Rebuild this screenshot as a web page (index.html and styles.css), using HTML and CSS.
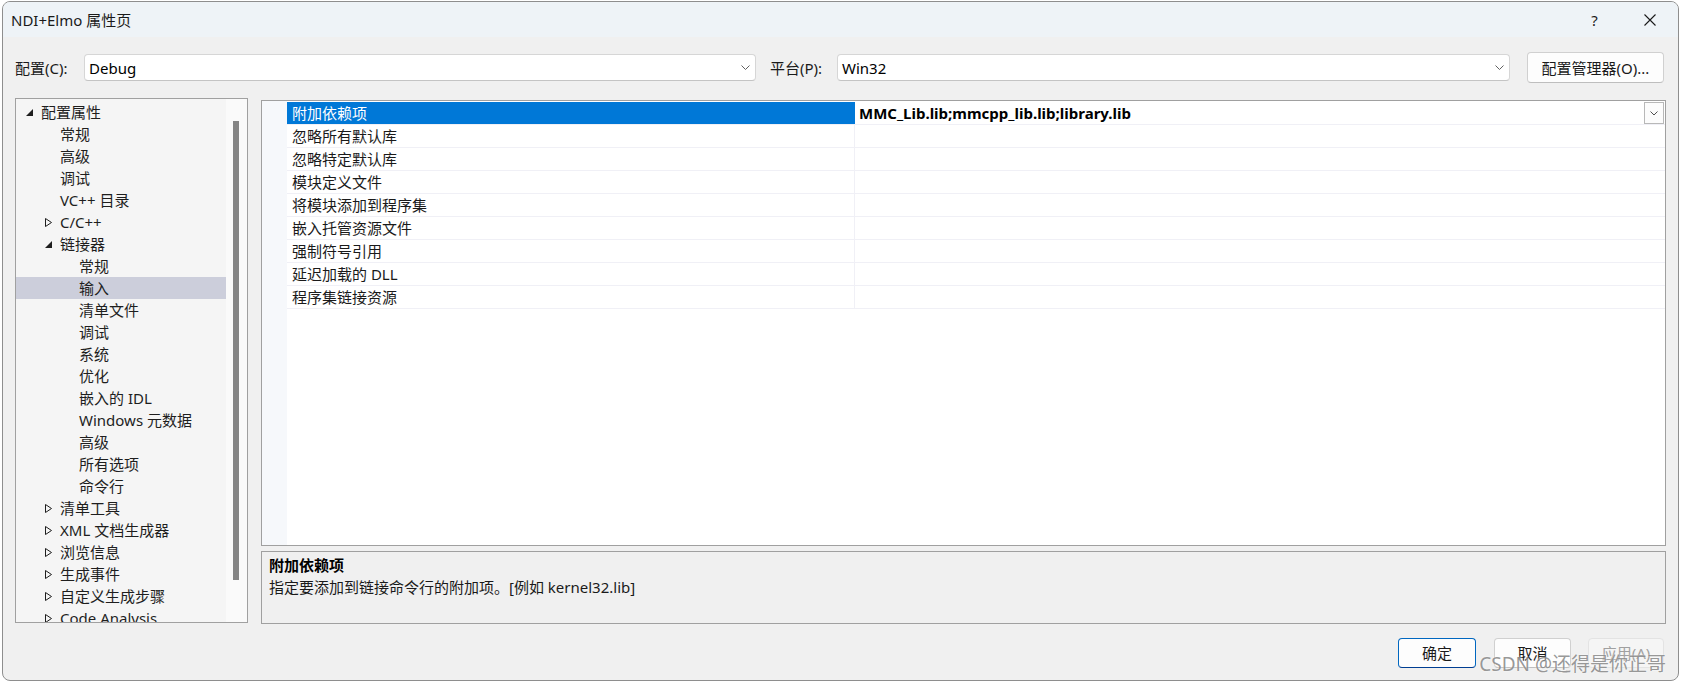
FILE: index.html
```html
<!DOCTYPE html>
<html lang="zh-CN">
<head>
<meta charset="utf-8">
<title>NDI+Elmo 属性页</title>
<link rel="stylesheet" href="styles.css">
</head>
<body>
<div class="window">
  <div class="titlebar">
    <div class="title">NDI+Elmo 属性页</div>
    <div class="tb-btn tb-help">?</div>
    <div class="tb-btn tb-close">
      <svg width="12" height="12" viewBox="0 0 12 12"><path d="M0.5 0.5 L11.5 11.5 M11.5 0.5 L0.5 11.5" stroke="#1a1a1a" stroke-width="1.1" fill="none"/></svg>
    </div>
  </div>
  <div class="content">
    <div class="config-row">
      <div class="lbl lbl-config">配置(C):</div>
      <div class="combo combo-config">
        <span class="combo-text">Debug</span>
        <svg class="chev" width="9" height="5" viewBox="0 0 9 5"><path d="M0.5 0.5 L4.5 4.5 L8.5 0.5" stroke="#606060" stroke-width="1" fill="none"/></svg>
      </div>
      <div class="lbl lbl-platform">平台(P):</div>
      <div class="combo combo-platform">
        <span class="combo-text">Win32</span>
        <svg class="chev" width="9" height="5" viewBox="0 0 9 5"><path d="M0.5 0.5 L4.5 4.5 L8.5 0.5" stroke="#606060" stroke-width="1" fill="none"/></svg>
      </div>
      <button class="btn btn-mgr">配置管理器(O)...</button>
    </div>

    <div class="main-row">
      <div class="tree">
        <div class="tree-list">
          <div class="ti l0"><span class="tw"><svg width="7" height="7" viewBox="0 0 7 7"><polygon points="7,0 7,7 0,7" fill="#1e1e1e"/></svg></span>配置属性</div>
          <div class="ti l1"><span class="tw"></span>常规</div>
          <div class="ti l1"><span class="tw"></span>高级</div>
          <div class="ti l1"><span class="tw"></span>调试</div>
          <div class="ti l1"><span class="tw"></span>VC++ 目录</div>
          <div class="ti l1"><span class="tw"><svg width="7" height="9" viewBox="0 0 7 9"><polygon points="0.5,0.5 6.5,4.5 0.5,8.5" fill="none" stroke="#1e1e1e" stroke-width="1"/></svg></span>C/C++</div>
          <div class="ti l1"><span class="tw"><svg width="7" height="7" viewBox="0 0 7 7"><polygon points="7,0 7,7 0,7" fill="#1e1e1e"/></svg></span>链接器</div>
          <div class="ti l2"><span class="tw"></span>常规</div>
          <div class="ti l2 sel"><span class="tw"></span>输入</div>
          <div class="ti l2"><span class="tw"></span>清单文件</div>
          <div class="ti l2"><span class="tw"></span>调试</div>
          <div class="ti l2"><span class="tw"></span>系统</div>
          <div class="ti l2"><span class="tw"></span>优化</div>
          <div class="ti l2"><span class="tw"></span>嵌入的 IDL</div>
          <div class="ti l2"><span class="tw"></span>Windows 元数据</div>
          <div class="ti l2"><span class="tw"></span>高级</div>
          <div class="ti l2"><span class="tw"></span>所有选项</div>
          <div class="ti l2"><span class="tw"></span>命令行</div>
          <div class="ti l1"><span class="tw"><svg width="7" height="9" viewBox="0 0 7 9"><polygon points="0.5,0.5 6.5,4.5 0.5,8.5" fill="none" stroke="#1e1e1e" stroke-width="1"/></svg></span>清单工具</div>
          <div class="ti l1"><span class="tw"><svg width="7" height="9" viewBox="0 0 7 9"><polygon points="0.5,0.5 6.5,4.5 0.5,8.5" fill="none" stroke="#1e1e1e" stroke-width="1"/></svg></span>XML 文档生成器</div>
          <div class="ti l1"><span class="tw"><svg width="7" height="9" viewBox="0 0 7 9"><polygon points="0.5,0.5 6.5,4.5 0.5,8.5" fill="none" stroke="#1e1e1e" stroke-width="1"/></svg></span>浏览信息</div>
          <div class="ti l1"><span class="tw"><svg width="7" height="9" viewBox="0 0 7 9"><polygon points="0.5,0.5 6.5,4.5 0.5,8.5" fill="none" stroke="#1e1e1e" stroke-width="1"/></svg></span>生成事件</div>
          <div class="ti l1"><span class="tw"><svg width="7" height="9" viewBox="0 0 7 9"><polygon points="0.5,0.5 6.5,4.5 0.5,8.5" fill="none" stroke="#1e1e1e" stroke-width="1"/></svg></span>自定义生成步骤</div>
          <div class="ti l1"><span class="tw"><svg width="7" height="9" viewBox="0 0 7 9"><polygon points="0.5,0.5 6.5,4.5 0.5,8.5" fill="none" stroke="#1e1e1e" stroke-width="1"/></svg></span>Code Analysis</div>
        </div>
        <div class="tree-scroll"><div class="thumb"></div></div>
      </div>

      <div class="right-col">
        <div class="grid">
          <div class="grid-margin"></div>
          <div class="grid-rows">
            <div class="gr sel">
              <div class="gn">附加依赖项</div>
              <div class="gv"><span class="gv-val">MMC_Lib.lib;mmcpp_lib.lib;library.lib</span>
                <span class="dd-btn"><svg width="8" height="5" viewBox="0 0 8 5"><path d="M0.5 0.5 L4 4 L7.5 0.5" stroke="#505050" stroke-width="1" fill="none"/></svg></span>
              </div>
            </div>
            <div class="gr"><div class="gn">忽略所有默认库</div><div class="gv"></div></div>
            <div class="gr"><div class="gn">忽略特定默认库</div><div class="gv"></div></div>
            <div class="gr"><div class="gn">模块定义文件</div><div class="gv"></div></div>
            <div class="gr"><div class="gn">将模块添加到程序集</div><div class="gv"></div></div>
            <div class="gr"><div class="gn">嵌入托管资源文件</div><div class="gv"></div></div>
            <div class="gr"><div class="gn">强制符号引用</div><div class="gv"></div></div>
            <div class="gr"><div class="gn">延迟加载的 DLL</div><div class="gv"></div></div>
            <div class="gr"><div class="gn">程序集链接资源</div><div class="gv"></div></div>
          </div>
        </div>
        <div class="desc">
          <div class="desc-title">附加依赖项</div>
          <div class="desc-text">指定要添加到链接命令行的附加项。[例如 kernel32.lib]</div>
        </div>
      </div>
    </div>

    <div class="button-row">
      <button class="btn btn-ok">确定</button>
      <button class="btn btn-cancel">取消</button>
      <button class="btn btn-apply">应用(A)</button>
    </div>
  </div>
  <div class="watermark">CSDN @还得是你正哥</div>
</div>
</body>
</html>
```

FILE: styles.css
```css
html, body {
  margin: 0;
  padding: 0;
}
body {
  background: #ffffff;
  font-family: "Noto Sans", "Noto Sans CJK SC", sans-serif;
  font-size: 15px;
  color: #1a1a1a;
}
.window {
  margin: 1px 0 0 2px;
  width: 1677px;
  height: 680px;
  box-sizing: border-box;
  border: 1px solid #8e8e8e;
  border-radius: 8px;
  background: #f0f0f0;
  overflow: hidden;
  position: relative;
  display: flex;
  flex-direction: column;
}
.titlebar {
  height: 35px;
  flex-shrink: 0;
  background: #eef3f7;
  display: flex;
  align-items: center;
}
.title {
  padding-left: 8px;
  line-height: 22px;
  color: #1a1a1a;
}
.tb-btn {
  height: 35px;
  display: flex;
  align-items: center;
  justify-content: center;
}
.tb-help {
  margin-left: auto;
  width: 55px;
  font-size: 15px;
  color: #1a1a1a;
}
.tb-close {
  width: 56px;
}
.content {
  flex: 1;
  padding: 0 12px;
  display: flex;
  flex-direction: column;
}
.config-row {
  margin-top: 15px;
  height: 31px;
  display: flex;
  align-items: center;
}
.lbl {
  line-height: 22px;
  white-space: nowrap;
}
.lbl-config {
  width: 69px;
}
.lbl-platform {
  margin-left: 14px;
  width: 67px;
}
.combo {
  height: 27px;
  box-sizing: border-box;
  background: #ffffff;
  border: 1px solid #d6d6d6;
  border-bottom-color: #c4c4c4;
  border-radius: 4px;
  display: flex;
  align-items: center;
  justify-content: space-between;
  padding: 0 5px 0 4px;
}
.combo-text {
  line-height: 22px;
  color: #000;
}
.combo-config {
  width: 672px;
}
.combo-platform {
  width: 673px;
}
.btn {
  height: 30px;
  box-sizing: border-box;
  border: 1px solid #d0d0d0;
  border-bottom-color: #bebebe;
  border-radius: 4px;
  background: #fdfdfd;
  font-family: inherit;
  font-size: 15px;
  color: #1a1a1a;
  padding: 0;
  line-height: 22px;
}
.btn-mgr {
  margin-left: 17px;
  width: 137px;
  height: 31px;
}
.main-row {
  margin-top: 15px;
  display: flex;
  gap: 13px;
}
.tree {
  width: 233px;
  height: 525px;
  box-sizing: border-box;
  border: 1px solid #a0a0a0;
  background: #f5f5f5;
  display: flex;
}
.tree-list {
  flex: 1;
  padding-top: 2px;
  overflow: hidden;
}
.tree-scroll {
  width: 21px;
  background: #fafafa;
}
.thumb {
  margin: 22px 0 0 7px;
  width: 6px;
  height: 459px;
  background: #858585;
}
.ti {
  height: 22px;
  line-height: 22px;
  display: flex;
  align-items: center;
  white-space: nowrap;
  color: #1e1e1e;
}
.tw {
  width: 15px;
  flex-shrink: 0;
  display: flex;
  align-items: center;
}
.l0 { padding-left: 10px; }
.l1 { padding-left: 29px; }
.l2 { padding-left: 48px; }
.ti.sel {
  background: #cccedb;
}
.right-col {
  width: 1405px;
  display: flex;
  flex-direction: column;
}
.grid {
  margin-top: 2px;
  height: 446px;
  box-sizing: border-box;
  border: 1px solid #a0a0a0;
  background: #ffffff;
  display: flex;
}
.grid-margin {
  width: 25px;
  background: #f6f8fb;
}
.grid-rows {
  flex: 1;
  padding-top: 1px;
}
.gr {
  display: flex;
  height: 23px;
  box-sizing: border-box;
  border-bottom: 1px solid #f0f0f6;
}
.gn {
  width: 568px;
  box-sizing: border-box;
  padding-left: 5px;
  line-height: 22px;
  border-right: 1px solid #f0f0f6;
  color: #1a1a1a;
}
.gv {
  flex: 1;
  padding-left: 4px;
  line-height: 22px;
  display: flex;
  justify-content: space-between;
  align-items: flex-start;
}
.gr.sel .gn {
  background: #0078d7;
  border-right-color: #0078d7;
  color: #ffffff;
}
.gv-val {
  font-weight: 700;
  color: #000;
}
.dd-btn {
  width: 20px;
  height: 22px;
  box-sizing: border-box;
  border: 1px solid #b8b8b8;
  background: #fcfcfc;
  margin-right: 1px;
  display: flex;
  align-items: center;
  justify-content: center;
}
.desc {
  margin-top: 5px;
  height: 73px;
  box-sizing: border-box;
  border: 1px solid #a0a0a0;
  padding: 2px 0 0 7px;
}
.desc-title {
  font-weight: 700;
  line-height: 22px;
  color: #000;
}
.desc-text {
  line-height: 22px;
  color: #1a1a1a;
}
.button-row {
  margin-top: 14px;
  display: flex;
  justify-content: flex-end;
  padding-right: 2px;
}
.btn-ok {
  width: 78px;
  border-color: #0067c0;
  border-bottom-color: #003e92;
}
.btn-cancel {
  width: 77px;
  margin-left: 18px;
}
.btn-apply {
  width: 76px;
  margin-left: 17px;
  background: #f5f5f5;
  border-color: #e3e3e3;
  color: #a0a0a0;
}
.watermark {
  position: absolute;
  right: 12px;
  bottom: 4px;
  font-size: 19px;
  line-height: 24px;
  color: rgba(125, 125, 125, 0.8);
  text-shadow: 0 0 2px rgba(255, 255, 255, 0.9);
  white-space: nowrap;
  pointer-events: none;
}
```
